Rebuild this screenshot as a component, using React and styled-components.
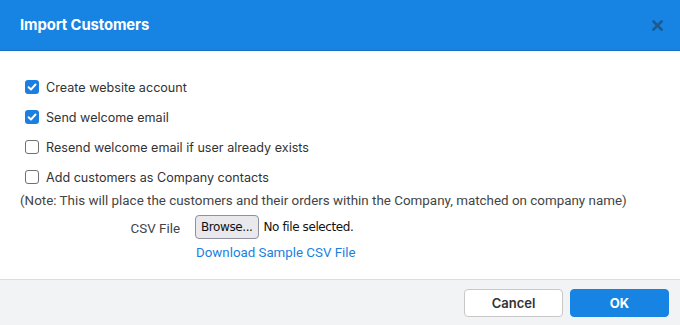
import React, { useState } from "react";
import styled, { createGlobalStyle } from "styled-components";

const GlobalStyle = createGlobalStyle`
  html, body {
    margin: 0;
    padding: 0;
    background: #ffffff;
  }
  body {
    font-family: Inter, "Noto Sans", sans-serif;
    color: #333333;
  }
`;

const Modal = styled.div`
  width: 680px;
  height: 325px;
  display: flex;
  flex-direction: column;
  background: #ffffff;
  overflow: hidden;
`;

const Header = styled.div`
  height: 50px;
  flex-shrink: 0;
  display: flex;
  align-items: center;
  justify-content: space-between;
  padding: 0 17px 0 20px;
  background: #1783e2;
  border-bottom: 1px solid #1570c4;
`;

const Title = styled.div`
  font-family: Inter, sans-serif;
  font-size: 14.8px;
  font-weight: 700;
  color: #ffffff;
  letter-spacing: -0.1px;
`;

const CloseButton = styled.button`
  border: none;
  background: none;
  padding: 0;
  display: flex;
  cursor: pointer;
`;

const Body = styled.div`
  flex: 1;
  padding: 21px 20px 0 20px;
`;

const CheckRow = styled.label`
  height: 30px;
  display: flex;
  align-items: center;
  gap: 7px;
  padding-left: 5px;
  font-size: 12.6px;
  color: #333333;
  cursor: pointer;
`;

const Box = styled.span`
  width: 14px;
  height: 14px;
  box-sizing: border-box;
  border-radius: 3px;
  display: flex;
  align-items: center;
  justify-content: center;
  background: ${(p) => (p.checked ? "#1a7fe0" : "#ffffff")};
  border: ${(p) => (p.checked ? "none" : "1.6px solid #707070")};
`;

const Note = styled.div`
  font-family: Roboto, sans-serif;
  font-size: 13.4px;
  color: #444444;
  margin-top: 0;
  line-height: 17px;
`;

const FileRow = styled.div`
  display: grid;
  grid-template-columns: 160px auto;
  column-gap: 15px;
  row-gap: 6px;
  margin-top: 6px;
  align-items: center;
`;

const FieldLabel = styled.div`
  font-family: Roboto, sans-serif;
  font-size: 13.4px;
  color: #444444;
  text-align: right;
  padding-top: 3px;
`;

const FileControl = styled.div`
  display: flex;
  align-items: center;
  gap: 5px;
  font-family: "DejaVu Sans", sans-serif;
  font-size: 12px;
  color: #111111;
`;

const BrowseButton = styled.button`
  height: 24px;
  padding: 0 5px;
  font-family: "DejaVu Sans", sans-serif;
  font-size: 12px;
  color: #111111;
  background: #e9e9ed;
  border: 1px solid #8f8f9d;
  border-radius: 4px;
  letter-spacing: -0.4px;
`;

const NoFile = styled.span`
  letter-spacing: -0.4px;
`;

const DownloadLink = styled.a`
  grid-column: 2;
  font-family: Roboto, sans-serif;
  font-size: 13.3px;
  color: #1a7fe0;
  text-decoration: none;
  margin-left: 1px;
`;

const Footer = styled.div`
  height: 46px;
  flex-shrink: 0;
  box-sizing: border-box;
  display: flex;
  align-items: center;
  justify-content: flex-end;
  gap: 7px;
  padding: 0 11px 0 0;
  background: #f2f3f5;
  border-top: 1px solid #dcdcdc;
`;

const Button = styled.button`
  width: 99px;
  height: 28px;
  border-radius: 4px;
  font-family: Inter, sans-serif;
  font-size: 13px;
  font-weight: ${(p) => (p.primary ? 700 : 600)};
  color: ${(p) => (p.primary ? "#ffffff" : "#333333")};
  background: ${(p) => (p.primary ? "#1783e2" : "#ffffff")};
  border: 1px solid ${(p) => (p.primary ? "#1783e2" : "#c8c8c8")};
  cursor: pointer;
`;

const Check = ({ checked, label, onToggle }) => (
  <CheckRow onClick={onToggle}>
    <Box checked={checked}>
      {checked && (
        <svg width="10" height="10" viewBox="0 0 10 10">
          <path
            d="M1.6 5.2 L4 7.5 L8.5 2.5"
            fill="none"
            stroke="#ffffff"
            strokeWidth="1.9"
            strokeLinecap="round"
            strokeLinejoin="round"
          />
        </svg>
      )}
    </Box>
    {label}
  </CheckRow>
);

const App = () => {
  const [opts, setOpts] = useState([true, true, false, false]);
  const labels = [
    "Create website account",
    "Send welcome email",
    "Resend welcome email if user already exists",
    "Add customers as Company contacts",
  ];

  const toggle = (i) => setOpts(opts.map((v, j) => (j === i ? !v : v)));

  return (
    <>
      <GlobalStyle />
      <Modal>
        <Header>
          <Title>Import Customers</Title>
          <CloseButton aria-label="Close">
            <svg width="11" height="11" viewBox="0 0 11 11">
              <path
                d="M1.5 1.5 L9.5 9.5 M9.5 1.5 L1.5 9.5"
                stroke="#1d5a8e"
                strokeWidth="2.6"
                strokeLinecap="square"
              />
            </svg>
          </CloseButton>
        </Header>
        <Body>
          {labels.map((label, i) => (
            <Check
              key={label}
              label={label}
              checked={opts[i]}
              onToggle={(e) => {
                e.preventDefault();
                toggle(i);
              }}
            />
          ))}
          <Note>
            (Note: This will place the customers and their orders within the
            Company, matched on company name)
          </Note>
          <FileRow>
            <FieldLabel>CSV File</FieldLabel>
            <FileControl>
              <BrowseButton>Browse...</BrowseButton>
              <NoFile>No file selected.</NoFile>
            </FileControl>
            <DownloadLink href="#">Download Sample CSV File</DownloadLink>
          </FileRow>
        </Body>
        <Footer>
          <Button>Cancel</Button>
          <Button primary>OK</Button>
        </Footer>
      </Modal>
    </>
  );
};

export default App;
